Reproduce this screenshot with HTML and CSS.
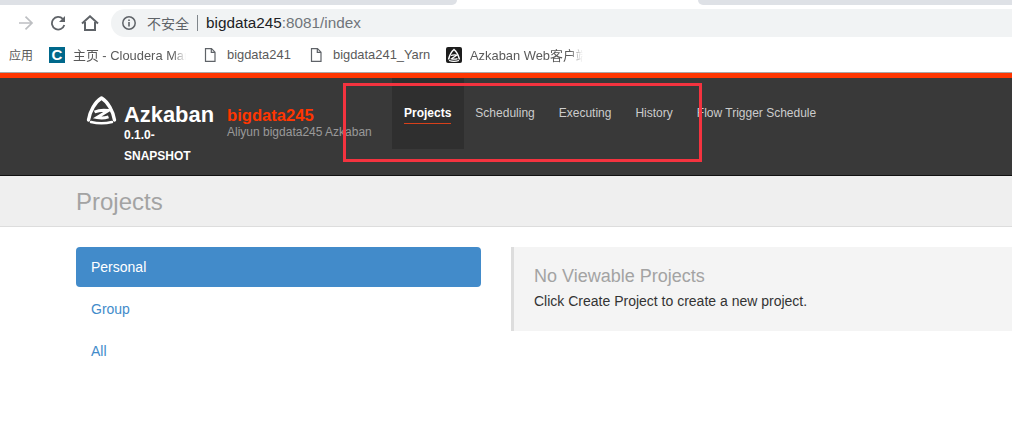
FILE: index.html
```html
<!DOCTYPE html>
<html lang="zh">
<head>
<meta charset="utf-8">
<title>Azkaban Web Client</title>
<link rel="stylesheet" href="styles.css">
</head>
<body>
<div class="tabstrip">
  <div class="tab tab-left"></div>
  <div class="tab tab-gap"></div>
  <div class="tab tab-right"></div>
</div>
<div class="toolbar">
  <svg class="tool tool-fwd" width="16" height="16" viewBox="0 0 16 16"><path d="M1 8h13M7.500 1.700 14 8l-6.500 6.300" fill="none" stroke="#bdbfc2" stroke-width="1.700"/></svg>
  <svg class="tool tool-reload" width="16" height="16" viewBox="0 0 16 16"><path d="M14.300 10A6.300 6.300 0 1 1 12.800 3.900" fill="none" stroke="#5f6368" stroke-width="1.800"/><path d="M15 1v6H9z" fill="#5f6368"/></svg>
  <svg class="tool tool-home" width="18" height="16" viewBox="0 0 18 16"><path d="M1 8.500 9 1.300l8 7.200M4 7v8h10V7" fill="none" stroke="#5f6368" stroke-width="2"/></svg>
  <div class="omnibox">
    <svg class="info" width="16" height="16" viewBox="0 0 16 16"><circle cx="8" cy="8" r="6.200" fill="none" stroke="#5f6368" stroke-width="1.500"/><path d="M8 7v4.500M8 4.400v1.500" stroke="#5f6368" stroke-width="1.600"/></svg>
    <span class="insecure">不安全</span>
    <span class="divider"></span>
    <span class="host">bigdata245</span><span class="port">:8081/index</span>
  </div>
</div>
<div class="bookmarks">
  <span class="bm bm-apps">应用</span>
  <span class="bm bm-cloudera"><span class="c-icon">C</span><span class="bm-text fade">主页 - Cloudera Manager</span></span>
  <span class="bm bm-241"><svg class="doc" width="12" height="14" viewBox="0 0 12 14"><path d="M1.500.7h6l3.500 3.500v9.100h-9.500zM7.300.7v3.700H11" fill="none" stroke="#5f6368" stroke-width="1.200"/></svg><span class="bm-text">bigdata241</span></span>
  <span class="bm bm-yarn"><svg class="doc" width="12" height="14" viewBox="0 0 12 14"><path d="M1.500.7h6l3.500 3.500v9.100h-9.500zM7.300.7v3.700H11" fill="none" stroke="#5f6368" stroke-width="1.200"/></svg><span class="bm-text">bigdata241_Yarn</span></span>
  <span class="bm bm-az"><svg class="az-icon" width="16" height="16" viewBox="0 0 16 16"><rect width="16" height="16" rx="2" fill="#1d1d1d"/><path d="M2.500 12.500C3.500 8.500 5.500 4.500 8 2.500c2.500 2 4.500 6 5.500 10" fill="none" stroke="#fff" stroke-width="1.500"/><path d="M5 8.500c2-.8 4-.8 6-.5L5.500 11.800c2 .5 4 .5 6-.2M3 13.500c3 1 7 1 10 0" fill="none" stroke="#fff" stroke-width="1.200"/></svg><span class="bm-text bm-fade-short">Azkaban Web客户端</span></span>
</div>
<header class="navbar">
  <div class="brand">
    <svg class="logo" width="31" height="29" viewBox="0 0 31 29"><path d="M2.500 24C4 15 9 6 15.500 2 22 6 27 15 28.500 24" fill="none" stroke="#fff" stroke-width="3.400" stroke-linejoin="round" stroke-linecap="round"/><path d="M8.500 16c4-1.800 9-2.200 14-1.500L11 21.500c4 .8 8 .5 11.500-.7" fill="none" stroke="#fff" stroke-width="3"/><path d="M5 26c6 1.500 15 1.500 21 0" fill="none" stroke="#fff" stroke-width="2.400" stroke-linecap="round"/></svg>
    <div class="brand-text">
      <div class="brand-name">Azkaban</div>
      <div class="brand-version">0.1.0-SNAPSHOT</div>
    </div>
  </div>
  <div class="cluster">
    <div class="cluster-name">bigdata245</div>
    <div class="cluster-sub">Aliyun bigdata245 Azkaban</div>
  </div>
  <nav class="nav">
    <a class="nav-item active"><span class="nav-label">Projects</span></a>
    <a class="nav-item"><span class="nav-label">Scheduling</span></a>
    <a class="nav-item"><span class="nav-label">Executing</span></a>
    <a class="nav-item"><span class="nav-label">History</span></a>
    <a class="nav-item"><span class="nav-label">Flow Trigger Schedule</span></a>
  </nav>
  <div class="annotation"></div>
</header>
<div class="page-head"><h1>Projects</h1></div>
<main class="content">
  <ul class="side">
    <li class="side-item active">Personal</li>
    <li class="side-item">Group</li>
    <li class="side-item">All</li>
  </ul>
  <section class="callout">
    <h4>No Viewable Projects</h4>
    <p>Click Create Project to create a new project.</p>
  </section>
</main>
</body>
</html>
```
FILE: styles.css
```css
* { box-sizing: border-box; }
html, body { margin: 0; padding: 0; }
body {
  width: 1012px;
  height: 426px;
  overflow: hidden;
  background: #fff;
  font-family: "Liberation Sans", Arial, sans-serif;
}
.tabstrip { height: 9px; background: #fff; display: flex; }
.tab { height: 5px; }
.tab-left { width: 457px; background: #dee1e6; border-radius: 0 0 8px 0; }
.tab-gap { width: 241px; background: #fff; }
.tab-right { flex: 1; background: #dee1e6; border-radius: 0 0 0 8px; }
.toolbar { height: 28px; display: flex; align-items: center; padding-left: 18px; }
.tool { flex: none; }
.tool-fwd { margin-right: 16px; }
.tool-reload { margin-right: 15px; }
.tool-home { margin-right: 12px; }
.omnibox {
  flex: 1;
  height: 28px;
  background: #f1f3f4;
  border-radius: 14px 0 0 14px;
  display: flex;
  align-items: center;
  padding-left: 10px;
  font-size: 15.300px;
}
.info { margin-right: 10px; flex: none; }
.insecure { font-family: "Noto Sans CJK SC", sans-serif; font-size: 14px; color: #5f6368; }
.divider { width: 1px; height: 16px; background: #80868b; margin: 0 8px; }
.host { color: #202124; }
.port { color: #70757a; }
.bookmarks { height: 36px; border-bottom: 1px solid #a8a8a8; display: flex; align-items: center; font-size: 12.900px; color: #5a5a5a; font-family: "Liberation Sans", "Noto Sans CJK SC", sans-serif; }
.bm { display: flex; align-items: center; flex: none; white-space: nowrap; }
.bm-apps { width: 49px; padding-left: 9px; font-family: "Noto Sans CJK SC", sans-serif; font-size: 12px; }
.c-icon { width: 16px; height: 16px; background: #00688b; color: #fff; font-weight: bold; font-size: 15px; line-height: 16px; text-align: center; margin-right: 8px; flex: none; }
.bm-cloudera { width: 155px; }
.bm-text { overflow: hidden; }
.fade { width: 113px; -webkit-mask-image: linear-gradient(to right, #000 88%, transparent); mask-image: linear-gradient(to right, #000 88%, transparent); }
.doc { margin-right: 11px; flex: none; }
.bm-241 { width: 106px; }
.bm-yarn { width: 136px; }
.az-icon { margin-right: 8px; flex: none; }
.bm-fade-short { width: 113px; -webkit-mask-image: linear-gradient(to right, #000 88%, transparent); mask-image: linear-gradient(to right, #000 88%, transparent); }
.navbar {
  position: relative;
  height: 103px;
  background: #393939;
  border-top: 5px solid #ff3601;
  border-bottom: 1px solid #111;
  display: flex;
  align-items: flex-start;
  padding-left: 86px;
}
.brand { width: 141px; display: flex; padding-top: 18px; flex: none; }
.logo { margin-right: 7px; flex: none; }
.brand-text { width: 90px; padding-top: 9px; }
.brand-name { color: #fff; font-size: 21.900px; font-weight: bold; line-height: 20px; }
.brand-version { color: #fff; font-size: 12px; font-weight: bold; line-height: 21px; width: 75px; }
.cluster { width: 165px; flex: none; padding-top: 28px; }
.cluster-name { color: #ff3601; font-size: 16.600px; font-weight: bold; line-height: 20px; }
.cluster-sub { color: #999; font-size: 12px; line-height: 13px; }
.nav { display: flex; }
.nav-item { height: 71px; padding: 0 12px; display: block; flex: none; }
.nav-label { display: block; margin-top: 27px; height: 19px; color: #ccc; font-size: 12px; line-height: 16px; white-space: nowrap; }
.nav-item.active { background: #2f2f2f; padding-right: 13px; margin-right: -1px; }
.nav-item.active .nav-label { color: #fff; font-weight: bold; border-bottom: 1px solid #d8401a; }
.annotation { position: absolute; left: 343px; top: 5px; width: 359px; height: 79px; border: 3px solid #f4333f; }
.page-head { height: 51px; background: #efefef; border-bottom: 1px solid #ddd; padding-left: 76px; }
.page-head h1 { margin: 0; padding-top: 1px; font-size: 24px; font-weight: normal; color: #a3a3a3; line-height: 50px; }
.content { display: flex; padding: 20px 0 0 76px; }
.side { list-style: none; margin: 0 30px 0 0; padding: 0; width: 405px; flex: none; }
.side-item { height: 40px; line-height: 40px; padding-left: 15px; margin-bottom: 2px; font-size: 14px; color: #428bca; border-radius: 4px; }
.side-item.active { background: #428bca; color: #fff; }
.callout { flex: 1; height: 84px; background: #f4f4f4; border-left: 3px solid #ddd; padding: 19px 20px; }
.callout h4 { margin: 0; font-size: 18px; font-weight: normal; color: #a3a3a3; line-height: 20px; }
.callout p { margin: 7px 0 0; font-size: 14px; color: #333; line-height: 16px; }
```
